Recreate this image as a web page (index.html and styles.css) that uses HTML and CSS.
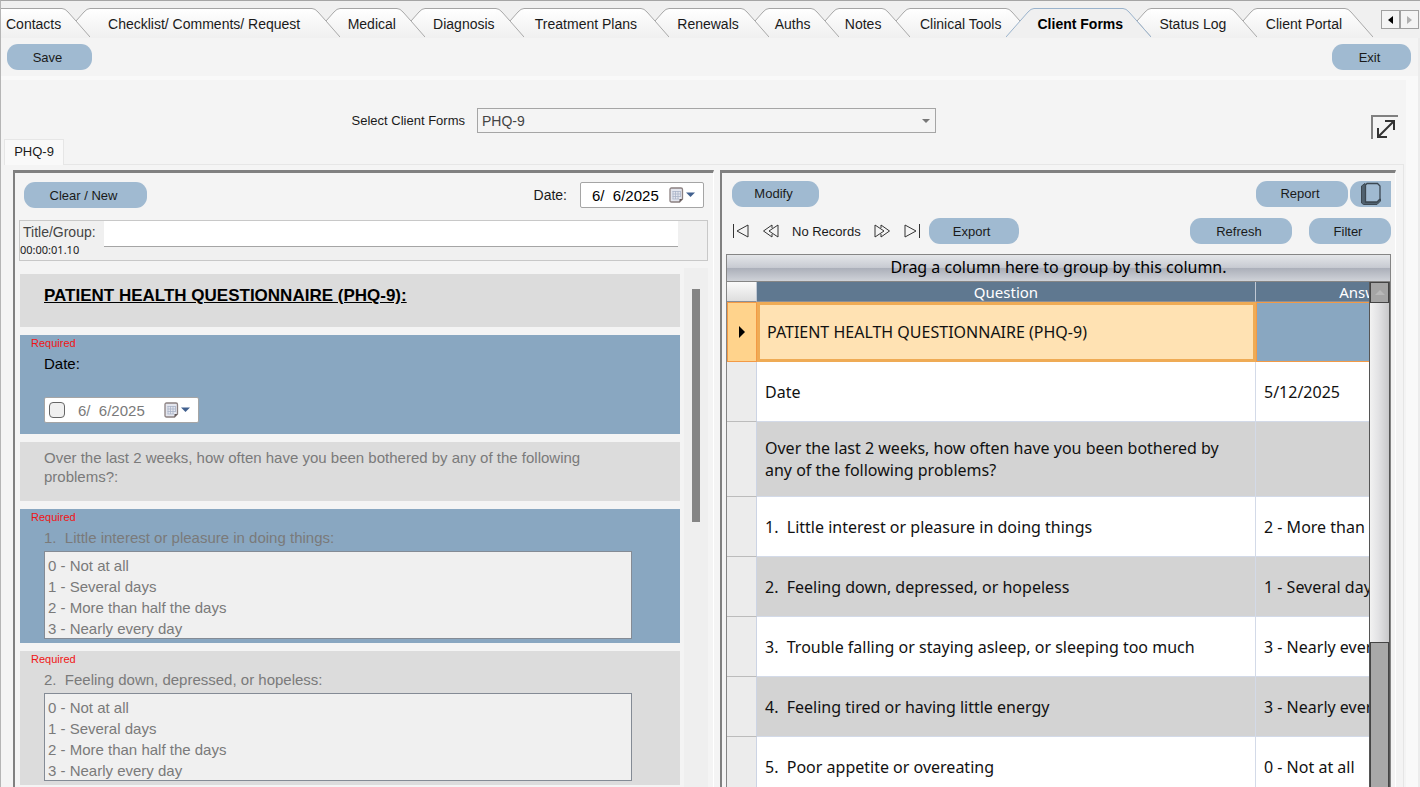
FILE: index.html
```html
<!DOCTYPE html>
<html lang="en">
<head>
  <meta charset="UTF-8">
  <meta name="viewport" content="width=device-width, initial-scale=1.0">
  <title>Client Forms</title>
  <link rel="stylesheet" href="styles.css">
</head>
<body>

  <!-- Shared shapes -->
  <svg class="defs" width="0" height="0" aria-hidden="true">
    <defs>
      <linearGradient id="tabFill" x1="0" y1="0" x2="0" y2="29" gradientUnits="userSpaceOnUse">
        <stop offset="0" stop-color="#ffffff"/>
        <stop offset="1" stop-color="#f0f0f0"/>
      </linearGradient>
      <symbol id="tabLeft" viewBox="0 0 14 29">
        <path d="M0 13 L8 4 Q11 .5 14 .5 V29 H0 Z" fill="url(#tabFill)"/>
        <path d="M0 13 L8 4 Q11 .5 14 .5 M0 13 L14 29" fill="none" stroke="#a8a8a8"/>
      </symbol>
      <symbol id="tabRight" viewBox="0 0 14 29">
        <path d="M0 .5 Q3 .5 6 4 L14 13 V29 H0 Z" fill="url(#tabFill)"/>
        <path d="M0 .5 Q3 .5 6 4 L14 13" fill="none" stroke="#a8a8a8"/>
      </symbol>
      <symbol id="tabEnd" viewBox="0 0 28 29">
        <path d="M0 .5 Q3 .5 6 4 L28 29 H0 Z" fill="url(#tabFill)"/>
        <path d="M0 .5 Q3 .5 6 4 L28 29" fill="none" stroke="#a8a8a8"/>
      </symbol>
      <symbol id="activeLeft" viewBox="0 0 28 29">
        <path d="M0 29 L22 4 Q25 .5 28 .5 V29 Z" fill="#f0f0f0"/>
        <path d="M0 29 L22 4 Q25 .5 28 .5" fill="none" stroke="#9ab3cc"/>
      </symbol>
      <symbol id="activeRight" viewBox="0 0 28 29">
        <path d="M0 .5 Q3 .5 6 4 L28 29 H0 Z" fill="#f0f0f0"/>
        <path d="M0 .5 Q3 .5 6 4 L28 29" fill="none" stroke="#9ab3cc"/>
      </symbol>
      <symbol id="calendar" viewBox="0 0 27 16">
        <path d="M2.500 1 H12 Q13.500 1 13.500 2.500 V12 L10.500 15 H2.500 Q1 15 1 13.500 V2.500 Q1 1 2.500 1 Z" fill="#e4e6ee" stroke="#8b8080" stroke-width="1.300"/>
        <path d="M3.500 4.500 H11.500 M3.500 7 H11.500 M3.500 9.500 H11.500 M3.500 12 H10 M4 4 V12 M6.500 4 V12 M9 4 V12 M11.500 4 V10" stroke="#aab4c8" stroke-width=".8"/>
        <path d="M10.500 15 V12 H13.500 Z" fill="#5f5656"/>
        <path d="M17 5.500 H26 L21.500 10 Z" fill="#41608f"/>
      </symbol>
    </defs>
  </svg>

  <!-- Tabs -->
  <header class="tab-bar">
    <nav class="tabs">
      <button class="tab first"><span>Contacts</span><svg class="cap"><use href="#tabRight"/></svg></button>
      <button class="tab"><svg class="cap"><use href="#tabLeft"/></svg><span>Checklist/ Comments/ Request</span><svg class="cap"><use href="#tabRight"/></svg></button>
      <button class="tab"><svg class="cap"><use href="#tabLeft"/></svg><span>Medical</span><svg class="cap"><use href="#tabRight"/></svg></button>
      <button class="tab"><svg class="cap"><use href="#tabLeft"/></svg><span>Diagnosis</span><svg class="cap"><use href="#tabRight"/></svg></button>
      <button class="tab"><svg class="cap"><use href="#tabLeft"/></svg><span>Treatment Plans</span><svg class="cap"><use href="#tabRight"/></svg></button>
      <button class="tab"><svg class="cap"><use href="#tabLeft"/></svg><span>Renewals</span><svg class="cap"><use href="#tabRight"/></svg></button>
      <button class="tab"><svg class="cap"><use href="#tabLeft"/></svg><span>Auths</span><svg class="cap"><use href="#tabRight"/></svg></button>
      <button class="tab"><svg class="cap"><use href="#tabLeft"/></svg><span>Notes</span><svg class="cap"><use href="#tabRight"/></svg></button>
      <button class="tab"><svg class="cap"><use href="#tabLeft"/></svg><span>Clinical Tools</span><svg class="cap"><use href="#tabRight"/></svg></button>
      <button class="tab active"><svg class="cap wide"><use href="#activeLeft"/></svg><span>Client Forms</span><svg class="cap wide"><use href="#activeRight"/></svg></button>
      <button class="tab"><svg class="cap"><use href="#tabLeft"/></svg><span>Status Log</span><svg class="cap"><use href="#tabRight"/></svg></button>
      <button class="tab last"><svg class="cap"><use href="#tabLeft"/></svg><span>Client Portal</span><svg class="cap wide"><use href="#tabEnd"/></svg></button>
    </nav>
    <div class="tab-scroll">
      <button aria-label="Previous tabs"><svg width="5" height="8"><path d="M5 0 V8 L0 4 Z" fill="#000"/></svg></button>
      <button aria-label="Next tabs" disabled><svg width="5" height="8"><path d="M0 0 V8 L5 4 Z" fill="#b0b0b0"/></svg></button>
    </div>
  </header>

  <main class="page">
    <div class="toolbar">
      <button class="btn btn-save">Save</button>
      <button class="btn btn-exit">Exit</button>
    </div>

    <div class="content">
      <div class="form-picker">
        <label for="clientForm">Select Client Forms</label>
        <div class="picker">
          <select id="clientForm"><option>PHQ-9</option></select>
          <svg class="picker-arrow" width="8" height="4"><path d="M0 0 H8 L4 4 Z" fill="#777"/></svg>
        </div>
        <button class="expand" aria-label="Expand">
          <svg width="20" height="20" viewBox="0 0 20 20" fill="none" stroke="#333" stroke-width="2">
            <path d="M2 18 L18 2 M9 2 H18 V11 M2 9 V18 H11"/>
          </svg>
        </button>
      </div>

      <div class="sub-tabs">
        <button class="sub-tab">PHQ-9</button>
      </div>

      <div class="panels">

        <!-- Entry form -->
        <section class="panel entry">
          <div class="entry-head">
            <button class="btn btn-clear">Clear / New</button>
            <label for="entryDate">Date:</label>
            <div class="date-box">
              <input type="text" id="entryDate" value="6/  6/2025">
              <svg class="calendar"><use href="#calendar"/></svg>
            </div>
          </div>

          <div class="title-box">
            <div class="title-row">
              <label for="titleGroup">Title/Group:</label>
              <input type="text" id="titleGroup">
            </div>
            <div class="timer">00:00:01.10</div>
          </div>

          <div class="form-scroll">
            <div class="cards">
              <div class="card heading">
                <h2>PATIENT HEALTH QUESTIONNAIRE (PHQ-9):</h2>
              </div>

              <div class="card blue date-card">
                <span class="required">Required</span>
                <label class="question dark" for="phqDate">Date:</label>
                <div class="date-box date-optional">
                  <input type="checkbox" aria-label="Use date">
                  <input type="text" id="phqDate" value="6/  6/2025">
                  <svg class="calendar"><use href="#calendar"/></svg>
                </div>
              </div>

              <div class="card note">
                <p>Over the last 2 weeks, how often have you been bothered by any of the following problems?:</p>
              </div>

              <div class="card blue">
                <span class="required">Required</span>
                <label class="question" for="q1">1.&nbsp; Little interest or pleasure in doing things:</label>
                <select id="q1" class="answers" size="4">
                  <option>0 - Not at all</option>
                  <option>1 - Several days</option>
                  <option>2 - More than half the days</option>
                  <option>3 - Nearly every day</option>
                </select>
              </div>

              <div class="card">
                <span class="required">Required</span>
                <label class="question" for="q2">2.&nbsp; Feeling down, depressed, or hopeless:</label>
                <select id="q2" class="answers" size="4">
                  <option>0 - Not at all</option>
                  <option>1 - Several days</option>
                  <option>2 - More than half the days</option>
                  <option>3 - Nearly every day</option>
                </select>
              </div>
            </div>
            <div class="form-track"><div class="form-thumb"></div></div>
          </div>
        </section>

        <!-- Saved answers -->
        <section class="panel records">
          <div class="records-head">
            <button class="btn btn-modify">Modify</button>
            <button class="btn btn-report">Report</button>
            <button class="btn btn-copy" aria-label="Copy">
              <svg width="22" height="24" viewBox="0 0 22 24">
                <path d="M5 1.500 L1.500 4 V21 L3.500 22.500 H17 L20.500 19 L20.500 17 L16.500 20 H5.500 V3 Z" fill="#50616f" stroke="#3c4852"/>
                <path d="M7 1.500 H17.500 L20 4 V17 L17 20 H5.500 V3 Z" fill="#a0bad1" stroke="#3c4852" stroke-width="1.300"/>
              </svg>
            </button>
          </div>

          <div class="records-nav">
            <button class="nav-btn" aria-label="First"><svg width="18" height="14"><path d="M1.500 0 V14 M16 1 V13 L5 7 Z"/></svg></button>
            <button class="nav-btn" aria-label="Previous"><svg width="18" height="14"><path d="M10 1 L1.500 7 L10 13 V10 M10 1 V4 M16 1 L7 7 L16 13 Z"/></svg></button>
            <span>No Records</span>
            <button class="nav-btn" aria-label="Next"><svg width="18" height="14"><path d="M8 1 L16.500 7 L8 13 V10 M8 1 V4 M2 1 L11 7 L2 13 Z"/></svg></button>
            <button class="nav-btn" aria-label="Last"><svg width="18" height="14"><path d="M16.500 0 V14 M2 1 V13 L13 7 Z"/></svg></button>
            <button class="btn btn-export">Export</button>
            <button class="btn btn-refresh">Refresh</button>
            <button class="btn btn-filter">Filter</button>
          </div>

          <div class="grid">
            <div class="group-bar">Drag a column here to group by this column.</div>
            <div class="grid-body">
              <div class="grid-clip">
                <table>
                  <colgroup>
                    <col class="col-mark">
                    <col class="col-question">
                    <col class="col-answer">
                  </colgroup>
                  <thead>
                    <tr><th class="corner"></th><th>Question</th><th>Answer</th></tr>
                  </thead>
                  <tbody>
                    <tr class="selected">
                      <th><svg width="6" height="12"><path d="M0 0 L6 6 L0 12 Z" fill="#000"/></svg></th>
                      <td>PATIENT HEALTH QUESTIONNAIRE (PHQ-9)</td>
                      <td></td>
                    </tr>
                    <tr><th></th><td>Date</td><td>5/12/2025</td></tr>
                    <tr class="tall"><th></th><td>Over the last 2 weeks, how often have you been bothered by any of the following problems?</td><td></td></tr>
                    <tr><th></th><td>1.&nbsp; Little interest or pleasure in doing things</td><td>2 - More than half the days</td></tr>
                    <tr class="alt"><th></th><td>2.&nbsp; Feeling down, depressed, or hopeless</td><td>1 - Several days</td></tr>
                    <tr><th></th><td>3.&nbsp; Trouble falling or staying asleep, or sleeping too much</td><td>3 - Nearly every day</td></tr>
                    <tr class="alt"><th></th><td>4.&nbsp; Feeling tired or having little energy</td><td>3 - Nearly every day</td></tr>
                    <tr><th></th><td>5.&nbsp; Poor appetite or overeating</td><td>0 - Not at all</td></tr>
                  </tbody>
                </table>
              </div>
              <div class="grid-scroll">
                <button class="scroll-up" aria-label="Scroll up"><svg width="10" height="5"><path d="M0 5 L5 0 L10 5 Z" fill="#b8b8b8"/></svg></button>
                <div class="scroll-light"></div>
                <div class="scroll-dark"></div>
              </div>
            </div>
          </div>
        </section>

      </div>
    </div>
  </main>

</body>
</html>
```
FILE: styles.css
```css
* {
  margin: 0;
  padding: 0;
  box-sizing: border-box;
}

body {
  height: 100vh;
  display: flex;
  flex-direction: column;
  overflow: hidden;
  background-color: #f9f9f9;
  color: #1a1a1a;
  font-family: "Liberation Sans", Arial, sans-serif;
  font-size: 14px;
}

button, input, select {
  font: inherit;
  color: inherit;
  border: none;
  border-radius: 0;
  outline: none;
}

svg {
  display: block;
  flex: none;
}

.defs {
  position: absolute;
}

/* Tab bar */
.tab-bar {
  flex: none;
  display: flex;
  height: 38px;
  border-top: 1px solid #a5a5a5;
  border-left: 1px solid #b5b5b5;
  background-color: #f0f0f0;
}

.tabs {
  flex: 1;
  display: grid;
  grid-template-columns: 75fr 250fr 85fr 99fr 145fr 99fr 70fr 71fr 124fr 117fr 106fr 116fr;
  padding-top: 7px;
}

.tab {
  display: flex;
  min-width: 0;
  height: 30px;
  background: none;
  white-space: nowrap;
}

.tab span {
  flex: 1;
  min-width: 0;
  display: flex;
  justify-content: center;
  height: 29px;
  line-height: 31px;
  border-top: 1px solid #a5a5a5;
  background: linear-gradient(#fff, #f0f0f0);
}

.tab:not(.first) span {
  padding-left: 6px;
}

.tab.first span {
  justify-content: flex-start;
  padding-left: 5px;
}

.tab.last {
  margin-right: -14px;
}

.cap {
  width: 14px;
  height: 29px;
}

.cap.wide {
  width: 28px;
}

.tab.active {
  position: relative;
  z-index: 1;
  margin: 0 -14px;
  color: #000;
  font-weight: bold;
}

.tab.active span {
  padding-left: 4px;
  border-color: #9ab3cc;
  background: #f0f0f0;
}

.tab-scroll {
  flex: none;
  display: flex;
  width: 61px;
  padding: 9px 0 0 22px;
}

.tab-scroll button {
  display: flex;
  align-items: center;
  justify-content: center;
  width: 19px;
  height: 19px;
  border: 1px solid #a0a0a0;
  background-color: #f4f4f4;
}

/* Page */
.page {
  flex: 1;
  min-height: 0;
  display: flex;
  flex-direction: column;
  border-left: 1px solid #b5b5b5;
  border-right: 2px solid #ececec;
}

.toolbar {
  flex: none;
  display: flex;
  justify-content: space-between;
  height: 38px;
  padding: 6px 7px 0 6px;
  background-color: #f4f4f4;
}

.btn {
  height: 26px;
  padding-right: 4px;
  border-radius: 11px;
  background-color: #a0bad1;
  font-size: 13px;
  white-space: nowrap;
}

.btn-save { width: 85px; }
.btn-exit { width: 79px; }
.btn-clear { width: 123px; }
.btn-modify { width: 87px; }
.btn-report { width: 92px; }
.btn-export { width: 90px; }
.btn-refresh { width: 102px; }
.btn-filter { width: 82px; }

.content {
  flex: 1;
  min-height: 0;
  display: flex;
  flex-direction: column;
  margin: 4px 12px 0 0;
  padding: 0 2px 0 3px;
  background-color: #f4f4f4;
}

.form-picker {
  flex: none;
  display: grid;
  grid-template-columns: 473fr 459fr 468fr;
  height: 59px;
  padding-top: 28px;
}

.form-picker label {
  justify-self: end;
  padding-right: 12px;
  font-size: 13px;
  line-height: 26px;
}

.picker {
  position: relative;
  height: 25px;
}

.picker select {
  width: 100%;
  height: 25px;
  padding: 0 4px;
  appearance: none;
  border: 1px solid #a5a5a5;
  background-color: #f4f4f4;
  color: #444;
}

.picker-arrow {
  position: absolute;
  right: 6px;
  top: 11px;
}

.expand {
  justify-self: end;
  display: flex;
  align-items: flex-end;
  justify-content: center;
  width: 27px;
  height: 24px;
  margin: 7px 6px 0 0;
  border-top: 2px solid #808080;
  border-left: 2px solid #808080;
  background: none;
}

.sub-tabs {
  flex: none;
  display: flex;
  height: 26px;
  border-bottom: 1px solid #e6e6e6;
}

.sub-tab {
  width: 60px;
  height: 26px;
  padding-bottom: 3px;
  border: 1px solid #e6e6e6;
  border-bottom: none;
  background-color: #f9f9f9;
  font-size: 13px;
}

.panels {
  flex: 1;
  min-height: 0;
  display: grid;
  grid-template-columns: 701fr 676fr;
  gap: 6px;
  padding: 5px 7px 0 9px;
  border-right: 1px solid #e6e6e6;
}

.panel {
  min-width: 0;
  min-height: 0;
  display: flex;
  flex-direction: column;
  border-top: 3px solid #808080;
  border-left: 2px solid #808080;
  border-right: 1px solid #fff;
}

/* Entry form */
.entry {
  padding: 0 5px 0 4px;
}

.entry-head {
  flex: none;
  display: flex;
  align-items: center;
  height: 47px;
  padding: 0 4px 3px 5px;
}

.entry-head label {
  margin: 0 13px 0 auto;
}

.date-box {
  display: flex;
  align-items: center;
  width: 124px;
  height: 26px;
  padding: 0 7px 0 11px;
  border: 1px solid #a5a5a5;
  border-radius: 2px;
  background-color: #fff;
  font-size: 15px;
  color: #000;
}

.date-box input[type="text"] {
  flex: 1;
  min-width: 0;
  height: 24px;
  background: none;
}

.calendar {
  width: 27px;
  height: 16px;
}

.title-box {
  flex: none;
  height: 41px;
  border: 1px solid #c8c8c8;
  background-color: #f0f0f0;
}

.title-row {
  display: flex;
  height: 26px;
  padding: 0 29px 0 3px;
}

.title-row label {
  width: 81px;
  line-height: 22px;
  color: #444;
}

.title-row input {
  flex: 1;
  min-width: 0;
  height: 26px;
  padding: 0 4px;
  border-bottom: 1px solid #a5a5a5;
  background-color: #fff;
}

.timer {
  font-family: "Noto Sans", sans-serif;
  font-size: 11px;
  line-height: 6px;
}

.form-scroll {
  flex: 1;
  min-height: 0;
  display: flex;
  gap: 4px;
  margin-top: 7px;
}

.cards {
  flex: 1;
  min-width: 0;
  display: flex;
  flex-direction: column;
  gap: 8px;
  padding: 6px 0 0 1px;
  overflow: hidden;
}

.card {
  flex: none;
  height: 134px;
  padding-left: 24px;
  background-color: #dcdcdc;
  font-size: 15px;
  color: #7a7a7a;
}

.card.blue {
  background-color: #89a7c1;
}

.card.heading {
  height: 53px;
}

.card h2 {
  font-size: 17px;
  line-height: 44px;
  color: #000;
  text-decoration: underline;
}

.card.date-card {
  height: 99px;
}

.card.note {
  height: 59px;
  padding-top: 6px;
  padding-right: 60px;
}

.card.note p {
  line-height: 19px;
}

.required {
  display: block;
  margin-left: -13px;
  font-size: 11px;
  line-height: 16px;
  color: #f01414;
}

.question {
  display: block;
  line-height: 26px;
}

.question.dark {
  color: #000;
}

.date-optional {
  width: 155px;
  margin-top: 20px;
  padding-left: 4px;
  color: #7a7a7a;
}

.date-optional input[type="checkbox"] {
  width: 16px;
  height: 16px;
  margin-right: 13px;
  appearance: none;
  border: 1px solid #666;
  border-radius: 4px;
  background-color: #f0f0f0;
}

.answers {
  display: block;
  width: 588px;
  max-width: 96%;
  height: 88px;
  padding: 5px 0 0 3px;
  overflow: hidden;
  border: 1px solid #848b95;
  background-color: #f0f0f0;
  color: #7a7a7a;
}

.answers option {
  height: 21px;
  padding: 0;
  line-height: 21px;
}

.form-track {
  flex: none;
  width: 24px;
  padding: 21px 8px 0;
  background-color: #efefef;
}

.form-thumb {
  height: 233px;
  background-color: #858585;
}

/* Saved answers */
.records {
  padding: 0 4px;
}

.records-head {
  flex: none;
  display: flex;
  align-items: center;
  height: 41px;
  padding: 0 0 0 6px;
}

.btn-report {
  margin: 0 2px 0 auto;
}

.btn-copy {
  display: flex;
  align-items: center;
  justify-content: center;
  width: 41px;
  padding: 0;
  border-radius: 11px 0 0 11px;
}

.records-nav {
  flex: none;
  display: flex;
  align-items: center;
  height: 34px;
  padding-left: 6px;
}

.nav-btn {
  margin-right: 12px;
  background: none;
}

.nav-btn path {
  fill: none;
  stroke: #333;
}

.records-nav span {
  margin-right: 12px;
  font-size: 13px;
}

.records-nav .btn-export {
  margin-left: -4px;
}

.btn-refresh {
  margin: 0 17px 0 auto;
}

.grid {
  flex: 1;
  min-height: 0;
  display: flex;
  flex-direction: column;
  margin-top: 6px;
  border: 1px solid #858585;
  border-bottom: none;
  font-family: "Noto Sans", "Segoe UI", sans-serif;
  font-size: 16px;
}

.group-bar {
  flex: none;
  height: 27px;
  line-height: 24px;
  text-align: center;
  background: linear-gradient(#e4e6e9, #c8cbd2 48%, #abafb9 50%, #cfd2d8);
  border-bottom: 1px solid #858585;
  color: #000;
}

.grid-body {
  flex: 1;
  min-height: 0;
  display: flex;
}

.grid-clip {
  flex: 1;
  min-width: 0;
  overflow: hidden;
}

table {
  width: 749px;
  table-layout: fixed;
  border-collapse: separate;
  border-spacing: 0;
}

.col-mark { width: 30px; }
.col-question { width: 499px; }
.col-answer { width: 220px; }

thead th {
  height: 20px;
  font-size: 15px;
  line-height: 18px;
  font-weight: normal;
  color: #fff;
  background-color: #5f7890;
  border-right: 1px solid #c0c8d4;
  border-bottom: 1px solid #8a8f98;
}

thead .corner {
  background: linear-gradient(#fafafa, #dedede);
}

tbody th {
  background-color: #ececec;
  border-right: 1px solid #ccd4e4;
  border-bottom: 1px solid #bcbcbc;
}

td {
  height: 60px;
  padding: 0 16px 0 8px;
  line-height: 22px;
  color: #111;
  background-color: #fff;
  border-right: 1px solid #d3dae8;
  border-bottom: 1px solid #d3dae8;
  white-space: nowrap;
}

.tall td {
  height: 75px;
  white-space: normal;
}

.tall td,
.alt td {
  background-color: #d3d3d3;
}

.selected th {
  background-color: #ffd38c;
  border: 1px solid #f39a45;
}

.selected th svg {
  margin: 0 auto;
}

.selected td {
  padding: 0 7px;
  background-color: #ffe2b3;
  border: 3px solid #efab55;
}

.selected td:last-child {
  background-color: #89a7c1;
  border: 1px solid #f39a45;
}

/* Grid scrollbar */
.grid-scroll {
  flex: none;
  display: flex;
  flex-direction: column;
  width: 21px;
  border-left: 1px solid #555;
  border-right: 1px solid #555;
}

.scroll-up {
  flex: none;
  display: flex;
  align-items: center;
  justify-content: center;
  height: 21px;
  border: 1px solid #444;
  background-color: #a5a5a5;
}

.scroll-light {
  flex: 340;
  background: linear-gradient(to right, #f2f2f2, #e2e2e4 45%, #c8c8ca);
}

.scroll-dark {
  flex: 145;
  border: 1px solid #444;
  border-bottom: none;
  background-color: #a8a8a8;
}
```
